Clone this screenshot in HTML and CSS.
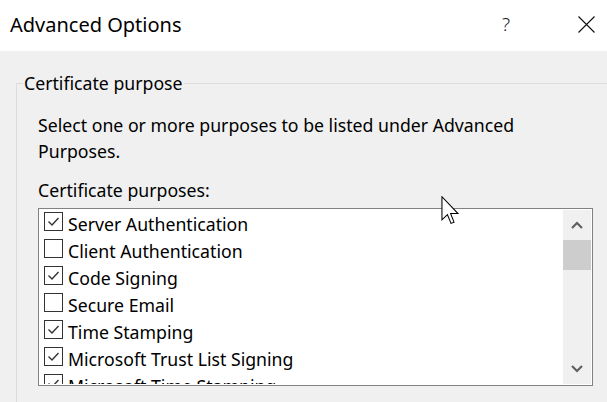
FILE: index.html
```html
<!DOCTYPE html>
<html>
<head>
<meta charset="utf-8">
<title>Advanced Options</title>
<link rel="stylesheet" href="styles.css">
</head>
<body>
<div class="dialog">
  <div class="titlebar">
    <div class="title">Advanced Options</div>
    <div class="help">?</div>
    <div class="close">
      <svg width="17" height="17" viewBox="0 0 17 17"><path d="M0.5 0.5 L16.5 16.5 M16.5 0.5 L0.5 16.5" stroke="#111" stroke-width="1.1" fill="none"/></svg>
    </div>
  </div>
  <div class="body">
    <fieldset class="group">
      <legend class="legend">Certificate purpose</legend>
      <div class="group-body">
        <p class="desc">Select one or more purposes to be listed under Advanced Purposes.</p>
        <div class="label">Certificate purposes:</div>
        <div class="listbox">
          <div class="items">
            <div class="item"><span class="cb checked"><svg viewBox="0 0 17 17"><path d="M3.5 8.5 L7 12 L13.5 5" /></svg></span><span>Server Authentication</span></div>
            <div class="item"><span class="cb"></span><span>Client Authentication</span></div>
            <div class="item"><span class="cb checked"><svg viewBox="0 0 17 17"><path d="M3.5 8.5 L7 12 L13.5 5" /></svg></span><span>Code Signing</span></div>
            <div class="item"><span class="cb"></span><span>Secure Email</span></div>
            <div class="item"><span class="cb checked"><svg viewBox="0 0 17 17"><path d="M3.5 8.5 L7 12 L13.5 5" /></svg></span><span>Time Stamping</span></div>
            <div class="item"><span class="cb checked"><svg viewBox="0 0 17 17"><path d="M3.5 8.5 L7 12 L13.5 5" /></svg></span><span>Microsoft Trust List Signing</span></div>
            <div class="item"><span class="cb checked"><svg viewBox="0 0 17 17"><path d="M3.5 8.5 L7 12 L13.5 5" /></svg></span><span>Microsoft Time Stamping</span></div>
          </div>
          <div class="scrollbar">
            <div class="sbtn"><svg width="12" height="8" viewBox="0 0 12 8"><path d="M1 7 L6 2 L11 7" /></svg></div>
            <div class="thumb"></div>
            <div class="track"></div>
            <div class="sbtn"><svg width="12" height="8" viewBox="0 0 12 8"><path d="M1 1 L6 6 L11 1" /></svg></div>
          </div>
        </div>
      </div>
    </fieldset>
  </div>
  <svg class="cursor" width="19" height="29" viewBox="0 0 12.5 19.5"><path d="M0.5 0.5 L0.5 16 L4.2 12.6 L6.6 18.4 L8.6 17.6 L6.3 11.8 L11.3 11.8 Z" fill="#fff" stroke="#000" stroke-width="0.7" stroke-linejoin="miter"/></svg>
</div>
</body>
</html>
```

FILE: styles.css
```css
html, body {
  margin: 0;
  padding: 0;
}
body {
  background: #f0f0f0;
  font-family: "Noto Sans", "Open Sans", "DejaVu Sans", sans-serif;
  color: #000;
  width: 607px;
  height: 402px;
  overflow: hidden;
}
.dialog {
  position: relative;
  width: 607px;
  height: 402px;
  overflow: hidden;
}
.titlebar {
  height: 51px;
  background: #fff;
  display: flex;
  align-items: center;
}
.title {
  font-size: 20px;
  padding-left: 10px;
  flex: 1;
  margin-top: -2px;
}
.help {
  font-size: 19px;
  width: 16px;
  margin-right: 60px;
  color: #222;
  margin-top: -3px;
  font-weight: 300;
}
.close {
  width: 17px;
  height: 17px;
  margin-right: 12px;
  margin-top: -2px;
}
.close svg {
  display: block;
}
.body {
  padding-top: 20px;
}
.group {
  margin: 0 -20px 0 16px;
  padding: 0 0 60px 6px;
  border: 1px solid #dcdcdc;
  min-width: 0;
}
.legend {
  font-size: 17.7px;
  padding: 0 1px;
  margin-left: 0;
  line-height: 24px;
}
.group-body {
  padding-left: 15px;
}
.desc {
  margin: 17px 0 0 0;
  font-size: 17.7px;
  line-height: 26px;
  width: 510px;
}
.label {
  margin-top: 15px;
  font-size: 17.7px;
  line-height: 22px;
}
.listbox {
  margin-top: 7px;
  width: 555px;
  height: 178px;
  box-sizing: border-box;
  border: 1px solid #828282;
  background: #fff;
  display: flex;
  padding: 1px;
}
.items {
  flex: 1;
  overflow: hidden;
  padding-left: 4px;
  padding-top: 1px;
}
.item {
  height: 27px;
  display: flex;
  align-items: flex-start;
  font-size: 17.7px;
  line-height: 27px;
  white-space: nowrap;
}
.cb {
  width: 19px;
  height: 19px;
  box-sizing: border-box;
  border: 1px solid #333;
  margin-top: 1px;
  margin-right: 5px;
  flex: none;
  display: flex;
}
.cb svg {
  width: 17px;
  height: 17px;
  fill: none;
  stroke: #333;
  stroke-width: 1.4;
}
.scrollbar {
  width: 28px;
  background: #f0f0f0;
  display: flex;
  flex-direction: column;
}
.sbtn {
  height: 30px;
  display: flex;
  align-items: center;
  justify-content: center;
}
.sbtn svg {
  fill: none;
  stroke: #606060;
  stroke-width: 2.2;
}
.thumb {
  height: 30px;
  background: #cdcdcd;
}
.track {
  flex: 1;
}
.cursor {
  position: absolute;
  left: 441px;
  top: 196px;
}
```
